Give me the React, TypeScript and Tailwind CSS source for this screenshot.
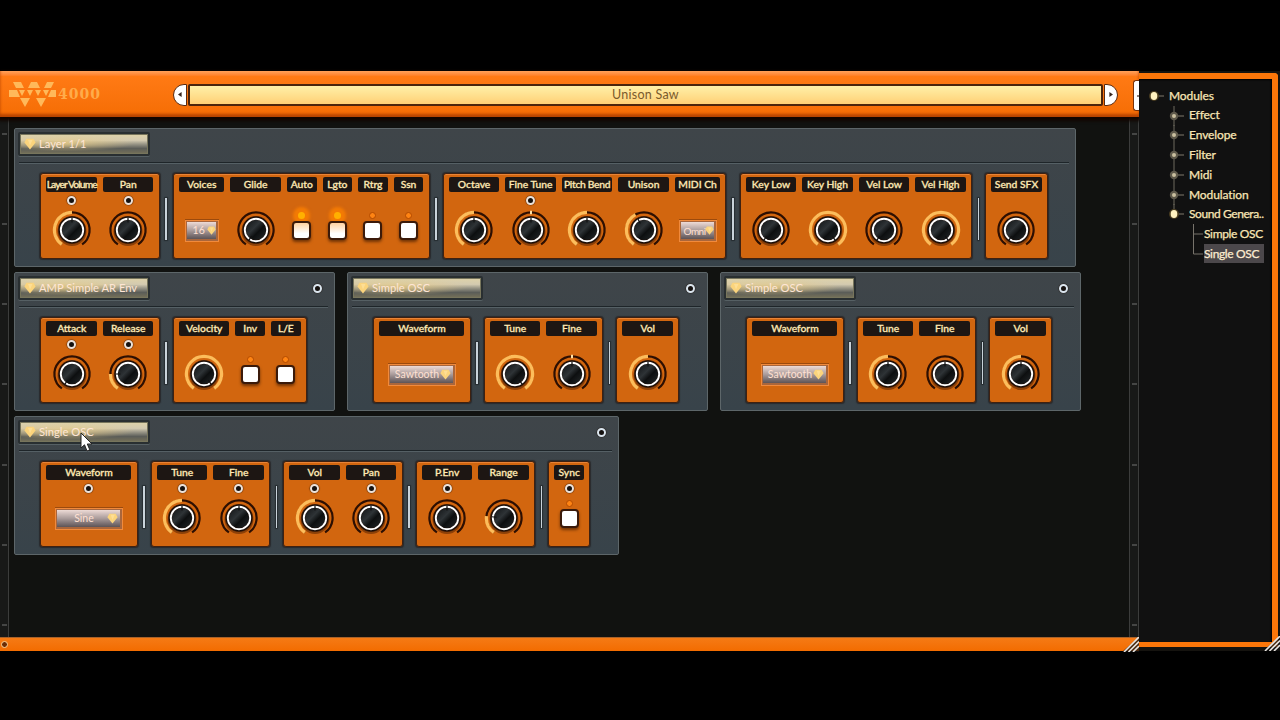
import type { ReactNode } from "react"
import clsx from "clsx"

type Item = {
  kind: "knob" | "toggle" | "select"
  label: string
  value?: number // 0..1, position of the knob
  center?: boolean // bipolar knob resting in the middle, no lit arc
  tick?: boolean
  mod?: boolean
  on?: boolean
  text?: string
  tight?: boolean
}

type ModuleData = {
  title: string
  width: string
  port?: boolean
  groups: Item[][]
}

const knob = (label: string, value: number, extra: Partial<Item> = {}): Item => ({ kind: "knob", label, value, ...extra })
const toggle = (label: string, extra: Partial<Item> = {}): Item => ({ kind: "toggle", label, ...extra })
const select = (label: string, text: string, extra: Partial<Item> = {}): Item => ({ kind: "select", label, text, ...extra })

const simpleOsc: ModuleData = {
  title: "Simple OSC",
  width: "w-[361px]",
  port: true,
  groups: [
    [select("Waveform", "Sawtooth")],
    [knob("Tune", 1), knob("Fine", 0.5, { center: true, tick: true })],
    [knob("Vol", 0.5)],
  ],
}

const simpleOsc2: ModuleData = {
  ...simpleOsc,
  groups: [
    [select("Waveform", "Sawtooth")],
    [knob("Tune", 0.5), knob("Fine", 0.5, { center: true })],
    [knob("Vol", 0.5)],
  ],
}

const rows: ModuleData[][] = [
  [
    {
      title: "Layer 1/1",
      width: "w-[1062px]",
      groups: [
        [knob("Layer Volume", 0.5, { mod: true, tight: true }), knob("Pan", 0.5, { center: true, mod: true })],
        [
          select("Voices", "16"),
          knob("Glide", 0),
          toggle("Auto", { on: true }),
          toggle("Lgto", { on: true }),
          toggle("Rtrg"),
          toggle("Ssn"),
        ],
        [
          knob("Octave", 0.5),
          knob("Fine Tune", 0.5, { center: true, tick: true, mod: true }),
          knob("Pitch Bend", 0.5),
          knob("Unison", 0.4),
          select("MIDI Ch", "Omni"),
        ],
        [knob("Key Low", 0), knob("Key High", 1), knob("Vel Low", 0), knob("Vel High", 1)],
        [knob("Send SFX", 0)],
      ],
    },
  ],
  [
    {
      title: "AMP Simple AR Env",
      width: "w-[321px]",
      port: true,
      groups: [
        [knob("Attack", 0, { mod: true }), knob("Release", 0.19, { mod: true })],
        [knob("Velocity", 1), toggle("Inv"), toggle("L/E")],
      ],
    },
    simpleOsc,
    simpleOsc2,
  ],
  [
    {
      title: "Single OSC",
      width: "w-[605px]",
      port: true,
      groups: [
        [select("Waveform", "Sine", { mod: true })],
        [knob("Tune", 0.5, { mod: true }), knob("Fine", 0.5, { center: true, mod: true })],
        [knob("Vol", 0.5, { mod: true }), knob("Pan", 0.5, { center: true, mod: true })],
        [knob("P.Env", 0.5, { center: true, mod: true }), knob("Range", 0.21)],
        [toggle("Sync", { mod: true })],
      ],
    },
  ],
]

const SWEEP = 145

function point(r: number, deg: number) {
  const a = (deg * Math.PI) / 180
  return `${(20 + r * Math.sin(a)).toFixed(2)} ${(20 - r * Math.cos(a)).toFixed(2)}`
}

function arc(r: number, from: number, to: number) {
  return `M${point(r, from)} A${r} ${r} 0 ${to - from > 180 ? 1 : 0} 1 ${point(r, to)}`
}

function Knob({ value = 0, center, tick }: Item) {
  const angle = -SWEEP + value * SWEEP * 2
  return (
    <svg width="40" height="40" viewBox="0 0 40 40" className="block shrink-0">
      <circle cx="20" cy="21.5" r="14.5" fill="#3a1500" opacity=".45" />
      <path d={arc(17.6, -SWEEP, SWEEP)} fill="none" stroke="#2d0f02" strokeWidth="2.2" />
      <circle cx="20" cy="20" r="14" fill="#5c2a08" />
      <circle cx="20" cy="20" r="13.4" fill="#1c0d06" />
      {value > 0 && !center && (
        <path d={arc(17.6, -SWEEP, angle)} fill="none" stroke="#fdbd5b" strokeWidth="3.2" />
      )}
      {tick && <path d="M20 0.8V4.2" stroke="#ffe3a8" strokeWidth="2" />}
      <circle cx="20" cy="20" r="10" fill="url(#cap)" />
      <circle cx="20" cy="20" r="11.2" fill="none" stroke="#fff" strokeWidth="1.9" />
      <path d={`M${point(12.4, angle)} L${point(7.5, angle)}`} stroke="#111" strokeWidth="1.2" />
    </svg>
  )
}

function Port({ light }: { light?: boolean }) {
  return (
    <span
      className={clsx(
        "block size-[9px] rounded-full border-2 bg-[#15110f] shadow-[0_0_1px_0.5px_rgba(30,15,5,0.6)]",
        light ? "border-[#dbe6ef]" : "border-[#efe3da]"
      )}
    />
  )
}

function Toggle({ on }: { on?: boolean }) {
  return (
    <div className="flex flex-col items-center pt-[1px]">
      <div className="flex h-[9px] items-center justify-center">
        {on ? (
          <span className="size-[7px] rounded-full bg-[#ffb000] shadow-[0_0_3px_5px_rgba(255,130,0,0.75)]" />
        ) : (
          <span className="size-[7px] rounded-full border border-[#b34a00] bg-[#ff8413]" />
        )}
      </div>
      <div
        className={clsx(
          "mt-[1px] size-[19px] rounded-[4px] border-[2px] border-[#3b1a0a] shadow-[0_2px_3px_rgba(50,20,0,0.6)]",
          on ? "bg-linear-to-b from-[#ffd2a0] to-white to-70%" : "bg-white"
        )}
      />
    </div>
  )
}

function Gem({ className }: { className?: string }) {
  return (
    <svg viewBox="0 0 12 12" className={clsx("shrink-0", className)}>
      <path d="M2.5 .8H9.5L11.6 4.6 6 11.5 .4 4.6Z" fill="#fbd47c" />
      <path d="M4 2H8.5L6 7.5Z" fill="#ffe2a0" opacity=".7" />
    </svg>
  )
}

function Select({ label, text }: Item) {
  const wide = label === "Waveform"
  return (
    <div
      className={clsx(
        "flex h-[22px] items-center border border-[#f18a3c] bg-[#a9663c] p-[1.5px] shadow-[0_-1px_0_#9c4a0c]",
        wide ? "w-[68px]" : label === "Voices" ? "w-[34px]" : "w-[38px]"
      )}
    >
      <div className="relative flex h-full w-full items-center justify-center bg-linear-to-b from-[#eedbd6] via-[#a99b9a] to-[#5d5457] text-[10.5px] leading-none text-[#ffe0d2]">
        <span className={clsx(wide ? "pr-2.5" : "pr-1.5", label === "MIDI Ch" && "text-[10px] tracking-[-0.5px]")}>{text}</span>
        <Gem className={clsx("absolute", wide ? "right-[2px] size-[11px]" : "right-0 size-[9px]")} />
      </div>
    </div>
  )
}

function itemWidth(item: Item) {
  if (item.kind === "toggle") return "w-[29.6px]"
  if (item.kind === "knob") return "w-[50.5px]"
  return item.label === "Waveform" ? "w-[85px]" : "w-[45.5px]"
}

function Control({ item }: { item: Item }) {
  return (
    <div className={clsx("flex flex-col items-center", itemWidth(item))}>
      <div className="flex h-[15px] w-full items-center justify-center rounded-[2px] bg-[#1d1613] pb-px">
        <span
          className={clsx(
            "whitespace-nowrap text-[10.3px] font-medium leading-none text-[#ffe9b4] [-webkit-text-stroke:0.3px_#ffe9b4]",
            item.tight && "tracking-[-0.9px]",
            item.label === "Pitch Bend" && "tracking-[-0.3px]"
          )}
        >
          {item.label}
        </span>
      </div>
      <div className="flex h-[18px] items-center pb-[1px]">{item.mod && <Port />}</div>
      <div className={clsx("flex h-[40px]", item.kind === "toggle" ? "items-start" : "items-center")}>
        {item.kind === "knob" && <Knob {...item} />}
        {item.kind === "toggle" && <Toggle on={item.on} />}
        {item.kind === "select" && <div className="pt-[1px]"><Select {...item} /></div>}
      </div>
    </div>
  )
}

function Group({ items }: { items: Item[] }) {
  return (
    <div className="flex h-[86px] gap-[6px] rounded-[3px] border border-[#3f2110] bg-[#d2660f] px-[5.2px] pt-[3px] shadow-[inset_0_1px_0_#e88336,0_0_1px_0.5px_rgba(30,25,25,0.6)]">
      {items.map((item) => (
        <Control key={item.label} item={item} />
      ))}
    </div>
  )
}

function Module({ data }: { data: ModuleData }) {
  return (
    <section className={clsx("h-[139px] shrink-0 rounded-[2px] border border-[#5d6669] bg-linear-to-b from-[#3f4549] to-[#38434a]", data.width)}>
      <div className="flex h-[33px] items-center justify-between pb-[3px] pl-[3px] pr-[12.5px]">
        <div className="h-[24px] w-[132px] rounded-[2px] border-2 border-[#292f31] shadow-[0_1px_0_#566064]">
          <div className="flex h-full items-center gap-[3px] border border-[#77755c] bg-[radial-gradient(ellipse_at_35%_45%,rgba(235,205,130,0.75)_0%,transparent_60%),linear-gradient(to_bottom,#ddd2aa_0%,#d3cab0_30%,#9a9788_50%,#5b5d58_75%,#726e58_100%)] pl-[3px]">
            <Gem className="size-[12px]" />
            <span className="text-[11.2px] leading-none text-[#ffe6d6]">{data.title}</span>
          </div>
        </div>
        {data.port && <Port light />}
      </div>
      <div className="ml-[4px] mr-[6px] h-[2px] border-b border-[#556065] bg-[#1e2529]" />
      <div className="flex gap-[5.8px] pl-[25.3px] pt-[9px]">
        {data.groups.map((items, i) => (
          <div key={i} className="flex gap-[5.8px]">
            {i > 0 && <span className="mt-[25px] h-[42px] w-[1.5px] bg-[#c9d3da] shadow-[0_0_1px_1px_#262d31]" />}
            <Group items={items} />
          </div>
        ))}
      </div>
    </section>
  )
}

function Rail() {
  return (
    <div className="flex w-[9px] shrink-0 flex-col border-r border-[#3c3d3c] bg-[#181918] pt-[16px]">
      <span className="mb-[88px] h-[2px] w-[5px] shrink-0 self-center bg-[#454645]" />
      {[0, 1, 2, 3, 4, 5].map((i) => (
        <span key={i} className="mb-[78.2px] h-[2px] w-[5px] shrink-0 self-center bg-[#454645]" />
      ))}
    </div>
  )
}

function Logo() {
  return (
    <div className="flex w-[173px] shrink-0 items-center pl-[8px]">
      <svg width="50" height="28" viewBox="0 0 50 28" fill="#ffb95a">
        <path d="M5 2H13L16 8H8ZM23 2H29L32 8H20ZM39 2H46L43 8H36Z" />
        <path d="M1 10H9L12 17H1ZM11 10H17L14 16ZM19 10H25L22 16ZM27 10H33L30 16ZM35 10H41L38 16ZM43 10H48V17H40Z" />
        <path d="M12 18H22L17 27ZM28 18H38L33 27Z" />
      </svg>
      <span className="font-['DejaVu_Serif'] text-[14px] font-bold leading-none tracking-[1px] text-[#ffac4a]">4000</span>
    </div>
  )
}

function Header() {
  return (
    <header className="relative flex h-[46px] shrink-0 items-center bg-linear-to-b from-[#ffa15a] from-0% via-[#ff7a14] via-12% to-[#f56d04] shadow-[inset_0_-3px_3px_#b54300,0_2px_3px_2px_#120600]">
      <Logo />
      <div className="flex h-[23px] flex-1 gap-px pt-px">
        <div className="flex w-[14px] items-center justify-center rounded-l-full border-[1.5px] border-[#5a2a10] bg-white">
          <svg width="4" height="5" viewBox="0 0 5 6"><path d="M4.5 0V6L0 3Z" fill="#35231c" /></svg>
        </div>
        <div className="flex w-[915px] items-center justify-center rounded-[2px] border-2 border-[#4c250c] bg-linear-to-b from-[#fff0a8] to-[#ffd075] pt-[2px] text-[12.5px] tracking-[0.25px] text-[#7a5a2c]">
          Unison Saw
        </div>
        <div className="flex w-[14px] items-center justify-center rounded-r-full border-[1.5px] border-[#5a2a10] bg-white">
          <svg width="4" height="5" viewBox="0 0 5 6"><path d="M.5 0V6L5 3Z" fill="#35231c" /></svg>
        </div>
      </div>
      <div className="mt-[3px] flex h-[31px] w-[6px] items-center justify-end rounded-l-[3px] border-[1.5px] border-r-0 border-[#7a3208] bg-white">
        <span className="h-[2px] w-[2px] bg-[#8d7f78]" />
      </div>
    </header>
  )
}

function Grip() {
  return (
    <svg width="17" height="15" viewBox="0 0 17 15">
      <path d="M17 0V15H0Z" fill="#111" opacity=".75" />
      <path d="M2 15L17 0M6.5 15L17 4.5M11 15L17 9" stroke="#e9e4df" strokeWidth="1.6" />
    </svg>
  )
}

function TreeRow({ children, open, child, last }: { children: ReactNode; open?: boolean; child?: boolean; last?: boolean }) {
  return (
    <li className="flex h-[19.8px] items-center">
      <svg width="20" height="20" viewBox="0 0 20 20" className="shrink-0">
        {child && <path d={last ? "M5 0V10" : "M5 0V20"} stroke="#6f6a5e" />}
        <path d="M8 10H15" stroke="#6f6a5e" strokeWidth="1.2" />
        {open ? (
          <>
            <circle cx="5" cy="10" r="5" fill="#4a3d20" />
            <ellipse cx="5" cy="10" rx="3.3" ry="4" fill="#fff2c0" />
          </>
        ) : (
          <>
            <circle cx="5" cy="10" r="4.2" fill="#5d584a" />
            <circle cx="5" cy="10" r="2" fill="#c9bf9f" />
          </>
        )}
      </svg>
      <span className={clsx("whitespace-nowrap", last ? "tracking-[-0.42px]" : "tracking-[-0.1px]")}>{children}</span>
    </li>
  )
}

function Sidebar() {
  const folders = ["Effect", "Envelope", "Filter", "Midi", "Modulation"]
  return (
    <aside className="relative flex w-[141px] shrink-0 flex-col bg-[#15130f] pr-[2px] pt-[2px] pb-[4px]">
      <div className="flex-1 overflow-hidden rounded-tr-[4px] border-t-[6px] border-r-[6px] border-b-[5px] border-[#fb7609] bg-[#111] shadow-[inset_-1px_1px_2px_#000]">
        <ul className="pl-[10px] pt-[6.8px] text-[12px] leading-none text-[#f9e6b5] [-webkit-text-stroke:0.25px_#f9e6b5]">
          <TreeRow open>Modules</TreeRow>
          <ul className="pl-[20px]">
            {folders.map((name) => (
              <TreeRow key={name} child>{name}</TreeRow>
            ))}
            <TreeRow open child last>Sound Genera..</TreeRow>
            <li className="flex pl-[24px]">
              <svg width="11" height="40" viewBox="0 0 11 40" className="shrink-0">
                <path d="M.5 0V30H10M.5 10H10" fill="none" stroke="#77736b" />
              </svg>
              <div className="whitespace-nowrap tracking-[-0.35px]">
                <div className="flex h-[20px] items-center">Simple OSC</div>
                <div className="flex h-[19px] w-[60px] items-center bg-[#4c484b] text-[#fff0e0]">Single OSC</div>
              </div>
            </li>
          </ul>
        </ul>
      </div>
      <div className="absolute right-0 bottom-0"><Grip /></div>
    </aside>
  )
}

export default function App() {
  return (
    <div className="relative h-[720px] w-[1280px] overflow-hidden bg-black pt-[71px] font-[Lato,sans-serif]">
      <svg width="0" height="0" className="absolute">
        <defs>
          <linearGradient id="cap" x1="0" y1="0" x2="1" y2="1">
            <stop offset="0" stopColor="#101214" />
            <stop offset=".4" stopColor="#2e3336" />
            <stop offset=".6" stopColor="#0d0f10" />
            <stop offset="1" stopColor="#24282a" />
          </linearGradient>
        </defs>
      </svg>

      <div className="flex h-[580px]">
        <main className="flex w-[1139px] shrink-0 flex-col">
          <Header />
          <div className="flex h-[520px] shrink-0 overflow-hidden bg-[#111210]">
            <Rail />
            <div className="flex flex-1 flex-col gap-[5px] pl-[5px] pt-[11px]">
              {rows.map((row, i) => (
                <div key={i} className="flex gap-[12px]">
                  {row.map((data, j) => (
                    <Module key={j} data={data} />
                  ))}
                </div>
              ))}
            </div>
            <div className="flex border-l border-[#3c3d3c]"><Rail /></div>
          </div>
          <footer className="flex h-[14px] items-center justify-between border-t border-[#a9622a] bg-linear-to-b from-[#f57a14] to-[#f36c00]">
            <span className="ml-[1px] block size-[7px] rounded-full border-[1.5px] border-[#ffd49a] bg-[#6b2c05]" />
            <Grip />
          </footer>
        </main>
        <Sidebar />
      </div>

      {/* Mouse pointer */}
      <svg width="14" height="21" viewBox="0 0 14 21" className="absolute top-[432px] left-[80px]">
        <path d="M1 1V16L4.5 12.8 7 19 9.8 17.8 7.3 12H12Z" fill="#fff" stroke="#222" strokeWidth="1" />
      </svg>
    </div>
  )
}
